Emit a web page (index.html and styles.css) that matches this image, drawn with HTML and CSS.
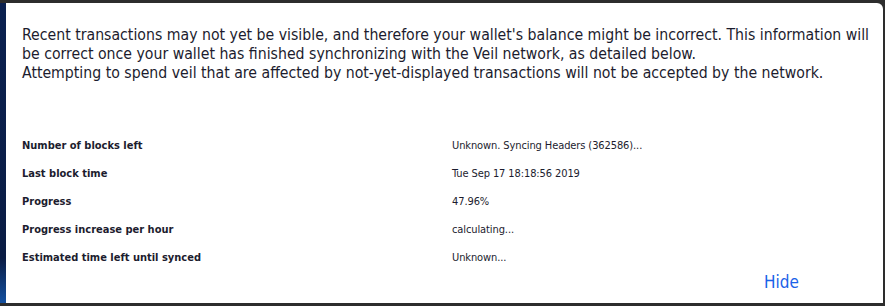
FILE: index.html
```html
<!DOCTYPE html>
<html lang="en">
<head>
  <meta charset="UTF-8">
  <meta name="viewport" content="width=device-width, initial-scale=1.0">
  <title>Modal overlay</title>
  <link rel="stylesheet" href="styles.css">
</head>
<body>
  <div class="desktop">
    <div class="wallpaper"></div>
    <div class="overlay">
      <p class="warning">Recent transactions may not yet be visible, and therefore your wallet's balance might be incorrect. This information will be correct once your wallet has finished synchronizing with the Veil network, as detailed below.<br>Attempting to spend veil that are affected by not-yet-displayed transactions will not be accepted by the network.</p>

      <div class="stats">
        <div class="row">
          <span class="label">Number of blocks left</span>
          <span class="value">Unknown. Syncing Headers (362586)...</span>
        </div>
        <div class="row">
          <span class="label">Last block time</span>
          <span class="value">Tue Sep 17 18:18:56 2019</span>
        </div>
        <div class="row">
          <span class="label">Progress</span>
          <span class="value">47.96%</span>
        </div>
        <div class="row">
          <span class="label">Progress increase per hour</span>
          <span class="value">calculating...</span>
        </div>
        <div class="row">
          <span class="label">Estimated time left until synced</span>
          <span class="value">Unknown...</span>
        </div>
      </div>

      <div class="actions">
        <button class="hide">Hide</button>
      </div>
    </div>
  </div>
</body>
</html>
```

FILE: styles.css
```css
html, body {
  margin: 0;
  height: 100%;
}
body {
  background: #2d2d2d;
  font-family: "DejaVu Sans Condensed", "DejaVu Sans", sans-serif;
  font-stretch: condensed;
  color: #1c1c2e;
}
.desktop {
  display: flex;
  height: 306px;
  padding: 3px 2px 3px 0;
  box-sizing: border-box;
}
.wallpaper {
  width: 6px;
  background: linear-gradient(to bottom, #0b2150 0%, #0a1c44 85%, #1450a0 100%);
}
.overlay {
  flex: 1;
  background: #fff;
  border-top-right-radius: 6px;
  padding: 22px 0 0 16px;
  display: flex;
  flex-direction: column;
}
.warning {
  margin: 0;
  font-size: 15.7px;
  line-height: 19px;
  padding-right: 4px;
}
.stats {
  margin-top: 50px;
  font-size: 11px;
}
.row {
  display: flex;
  height: 28px;
  line-height: 28px;
}
.label {
  width: 430px;
  font-weight: bold;
}
.value {
  letter-spacing: -0.1px;
}
.actions {
  display: flex;
  justify-content: flex-end;
  padding-right: 84px;
}
.hide {
  background: none;
  border: none;
  padding: 0;
  font: inherit;
  font-size: 17px;
  color: #1a62e8;
  cursor: pointer;
}
```
